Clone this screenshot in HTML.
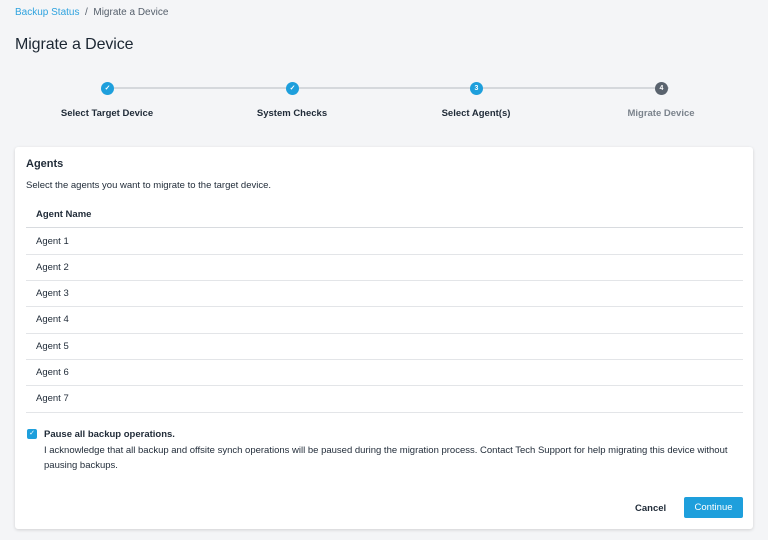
<!DOCTYPE html>
<html><head><style>
*{margin:0;padding:0;box-sizing:border-box}
body{width:768px;height:540px;background:#f4f5f7;font-family:"Liberation Sans",sans-serif;color:#1f2a37;position:relative;overflow:hidden}
.a{position:absolute;white-space:nowrap}
.bc{top:7px;left:15px;font-size:10px;color:#555f6b}
.bc span{color:#2fa3df}
h1{position:absolute;top:36px;left:15px;font-size:16px;font-weight:normal;color:#1c2733;letter-spacing:-.1px}
.line{position:absolute;top:87px;height:2px;background:#d5d8dc}
.c{position:absolute;top:82px;width:13px;height:13px;border-radius:50%;background:#1e9fdc;color:#fff;font-size:7px;font-weight:bold;text-align:center;line-height:13px}
.lab{position:absolute;top:108px;font-size:9.5px;font-weight:bold;transform:translateX(-50%);white-space:nowrap}
.card{position:absolute;left:15px;top:147px;width:738px;height:382px;background:#fff;border-radius:3px;box-shadow:0 1px 3px rgba(0,0,0,.15)}
.row{position:absolute;left:11px;width:717px;height:26.3px;border-bottom:1px solid #e3e5e8;font-size:9.5px;padding-left:10px;line-height:26px}
</style></head><body>
<div class="a bc"><span>Backup Status</span> &nbsp;/&nbsp; Migrate a Device</div>
<h1>Migrate a Device</h1>
<div class="line" style="left:114px;width:555px"></div>
<div class="c" style="left:101px">✓</div>
<div class="c" style="left:286px">✓</div>
<div class="c" style="left:470px">3</div>
<div class="c" style="left:655px;background:#5a636e">4</div>
<div class="lab" style="left:107px">Select Target Device</div>
<div class="lab" style="left:292px">System Checks</div>
<div class="lab" style="left:476px">Select Agent(s)</div>
<div class="lab" style="left:661px;color:#7b838c">Migrate Device</div>
<div class="card">
<div class="a" style="left:11px;top:11px;font-size:11px;font-weight:bold">Agents</div>
<div class="a" style="left:11px;top:33px;font-size:9.5px">Select the agents you want to migrate to the target device.</div>
<div class="row" style="top:55px;font-weight:bold;border-bottom:1.5px solid #d8dbdf">Agent Name</div>
<div class="row" style="top:81.5px">Agent 1</div>
<div class="row" style="top:107.8px">Agent 2</div>
<div class="row" style="top:134.1px">Agent 3</div>
<div class="row" style="top:160.4px">Agent 4</div>
<div class="row" style="top:186.7px">Agent 5</div>
<div class="row" style="top:213px">Agent 6</div>
<div class="row" style="top:239.3px">Agent 7</div>
<div class="a" style="left:12px;top:282px;width:10px;height:10px;background:#1e9fdc;border-radius:2px;color:#fff;font-size:7px;text-align:center;line-height:10px">✓</div>
<div class="a" style="left:29px;top:282px;font-size:9.5px;font-weight:bold">Pause all backup operations.</div>
<div class="a" style="left:29px;top:296px;font-size:9.5px;line-height:15px;white-space:normal;width:690px">I acknowledge that all backup and offsite synch operations will be paused during the migration process. Contact Tech Support for help migrating this device without pausing backups.</div>
<div class="a" style="left:620px;top:356px;font-size:9.5px;font-weight:bold">Cancel</div>
<div class="a" style="left:669px;top:350px;width:59px;height:21px;background:#1e9fdc;border-radius:2px;color:#fff;font-size:9.5px;text-align:center;line-height:21px">Continue</div>
</div>
</body></html>
